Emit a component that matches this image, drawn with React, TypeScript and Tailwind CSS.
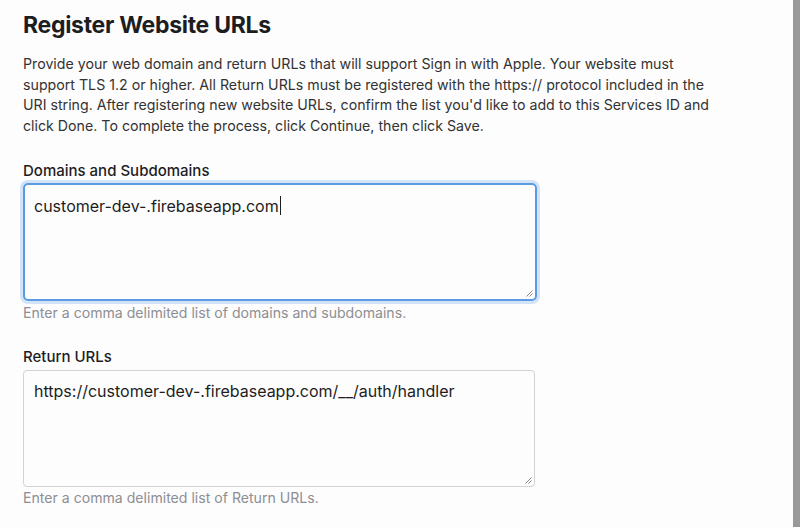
import React from 'react';

// little diagonal grip drawn in the corner of a textarea
const ResizeGrip: React.FC = () => (
  <svg
    className="absolute bottom-[2px] right-[2px] h-[8px] w-[8px] text-[#8a8a8a]"
    viewBox="0 0 8 8"
    fill="none"
    stroke="currentColor"
    strokeWidth="1"
  >
    <path d="M7.5 1.5 1.5 7.5" />
    <path d="M7.5 4.5 4.5 7.5" />
  </svg>
);

const App: React.FC = () => {
  return (
    <div className="flex min-h-[527px] w-full bg-[#fdfdfd] font-['Inter',sans-serif] text-[#1d1d1f]">
      <div className="flex-1 pl-[23px] pt-[11px]">
        <h1 className="text-[23px] font-bold leading-[28px] tracking-[-0.3px]">
          Register Website URLs
        </h1>
        <p className="mt-[15px] text-[14.2px] leading-[20.7px] text-[#333]">
          Provide your web domain and return URLs that will support Sign in with Apple. Your website must
          <br />
          support TLS 1.2 or higher. All Return URLs must be registered with the https:// protocol included in the
          <br />
          URI string. After registering new website URLs, confirm the list you&apos;d like to add to this Services ID and
          <br />
          click Done. To complete the process, click Continue, then click Save.
        </p>

        {/* Domains */}
        <label className="mt-[24px] block text-[15px] font-medium leading-[20px] text-[#1d1d1f]">
          Domains and Subdomains
        </label>
        <div className="relative mt-[2px] h-[118px] w-[514px] rounded-[5px] border-2 border-[#5b9be3] px-[9px] pt-[8px] text-[16px] leading-[22px] text-[#1d1d1f] shadow-[0_0_0_3px_#d3e3f8]">
          customer-dev-.firebaseapp.com
          <span className="ml-[1px] inline-block h-[19px] w-[1.5px] translate-y-[3px] bg-[#1d1d1f]" />
          <ResizeGrip />
        </div>
        <p className="mt-[2px] text-[14.1px] leading-[20px] text-[#8e8e93]">
          Enter a comma delimited list of domains and subdomains.
        </p>

        {/* Return URLs */}
        <label className="mt-[24px] block text-[15px] font-medium leading-[20px] text-[#1d1d1f]">
          Return URLs
        </label>
        <div className="relative mt-[3px] h-[117px] w-[512px] rounded-[4px] border border-[#d2d2d7] px-[10px] pt-[9px] text-[16px] leading-[22px] text-[#1d1d1f]">
          https://customer-dev-.firebaseapp.com/__/auth/handler
          <ResizeGrip />
        </div>
        <p className="mt-[1px] text-[14.1px] leading-[20px] text-[#8e8e93]">
          Enter a comma delimited list of Return URLs.
        </p>
      </div>
      <div className="w-[7px] bg-[#9a9a9a]" />
    </div>
  );
};

export default App;
